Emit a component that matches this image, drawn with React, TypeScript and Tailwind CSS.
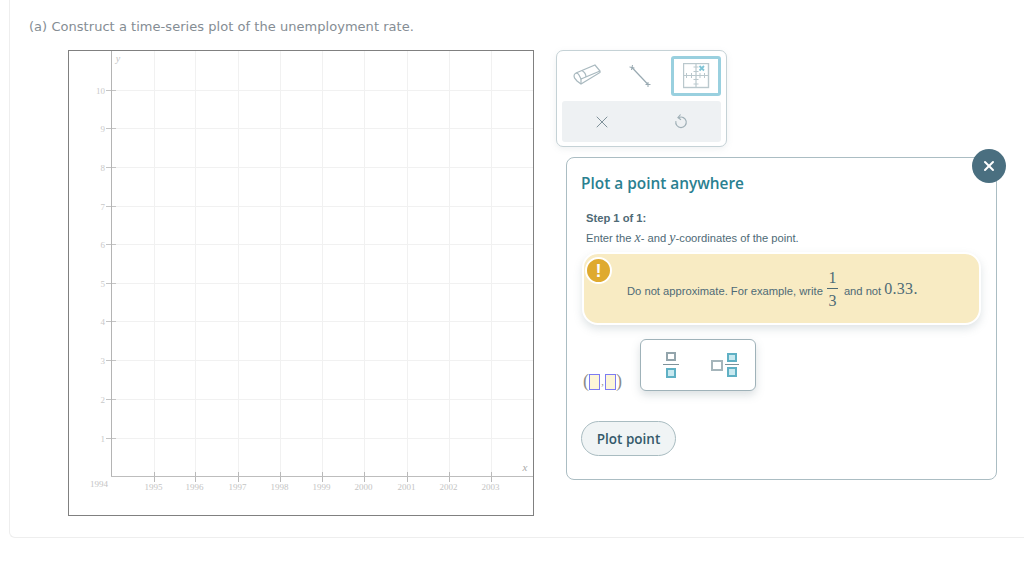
import { X } from "lucide-react";

const yTicks = [
  { label: "10", y: 90.5 },
  { label: "9", y: 128.5 },
  { label: "8", y: 167.5 },
  { label: "7", y: 206.5 },
  { label: "6", y: 244.5 },
  { label: "5", y: 283.5 },
  { label: "4", y: 321.5 },
  { label: "3", y: 360.5 },
  { label: "2", y: 399.5 },
  { label: "1", y: 438.5 },
];

const xTicks = [
  { label: "1995", x: 154.5 },
  { label: "1996", x: 195.5 },
  { label: "1997", x: 238.5 },
  { label: "1998", x: 280.5 },
  { label: "1999", x: 322.5 },
  { label: "2000", x: 364.5 },
  { label: "2001", x: 407.5 },
  { label: "2002", x: 449.5 },
  { label: "2003", x: 491.5 },
];

function Chart() {
  return (
    <div className="h-[466px] w-[466px] shrink-0 border border-[#808080]">
      {/* viewBox is in page coordinates, inside the 1px border */}
      <svg viewBox="69 51 464 464" className="block h-[464px] w-[464px]" style={{ fontFamily: "'Liberation Serif', serif" }}>
        {yTicks.map((t) => (
          <g key={t.label}>
            <line x1={111} x2={533} y1={t.y} y2={t.y} stroke="#f1f1f1" />
            <line x1={106} x2={116} y1={t.y} y2={t.y} stroke="#c4c4c4" />
            <text x={105} y={t.y + 3} textAnchor="end" fontSize={9} fill="#c9c9c9">
              {t.label}
            </text>
          </g>
        ))}
        {xTicks.map((t) => (
          <g key={t.label}>
            <line x1={t.x} x2={t.x} y1={51} y2={477} stroke="#f1f1f1" />
            <line x1={t.x} x2={t.x} y1={472} y2={482} stroke="#b9b9b9" />
            <text x={t.x - 1} y={490} textAnchor="middle" fontSize={9} fill="#c4c4c4">
              {t.label}
            </text>
          </g>
        ))}
        <line x1={111.5} x2={111.5} y1={51} y2={477} stroke="#b4b4b4" />
        <line x1={111} x2={533} y1={476.5} y2={476.5} stroke="#bdbdbd" />
        <text x={99} y={487} textAnchor="middle" fontSize={9} fill="#c4c4c4">
          1994
        </text>
        <text x={118} y={62} textAnchor="middle" fontSize={10} fontStyle="italic" fill="#c4c4c4">
          y
        </text>
        <text x={525} y={471} textAnchor="middle" fontSize={11} fontStyle="italic" fill="#a9a9a9">
          x
        </text>
      </svg>
    </div>
  );
}

function EraserIcon() {
  return (
    <svg width="30" height="23" viewBox="0 0 30 23" fill="none" stroke="#a9b9bf" strokeWidth="1.2">
      <path d="M1 13 Q1 11 3 10 L22 2 L27 8 L27 9.5 L8 21 L4 18 L1.5 15 Z" />
      <path d="M3 10 Q5 10 6 12 L8 16 L27 8" />
      <path d="M8 16 L8 21" />
      <path d="M9 7.5 Q13 10 13 14" />
    </svg>
  );
}

function LineIcon() {
  return (
    <svg width="24" height="24" viewBox="0 0 24 24" fill="none" stroke="#98a9b1" strokeWidth="1">
      <path d="M4 3.5 L20 20.5" strokeWidth="1.2" />
      <path d="M1.5 3 L6.5 4 M4.5 1 L3.5 6 M17.5 20.5 L22.5 20.5 M20 18 L20 23" />
    </svg>
  );
}

function GridIcon() {
  return (
    <svg width="27" height="26" viewBox="0 0 27 26" fill="none" stroke="#bac8cd" strokeWidth="1">
      <rect x="0.5" y="0.5" width="25" height="24" strokeWidth="1.4" />
      <path d="M13 0 V25 M0 12.5 H26" strokeWidth="1.2" />
      <path d="M3.5 10 V15 M8.5 10 V15 M17 10 V15 M21.5 10 V15" />
      <path d="M10.5 4 H15.5 M10.5 8.5 H15.5 M10.5 16.5 H15.5 M10.5 21 H15.5" />
      <path d="M16.5 3 L21 7.5 M21 3 L16.5 7.5" stroke="#7fc4d6" strokeWidth="1.8" />
    </svg>
  );
}

function UndoIcon() {
  return (
    <svg width="14" height="17" viewBox="0 0 16 18" fill="none" stroke="#9fafb6" strokeWidth="1.3">
      <path d="M5.5 4.5 A6 6 0 1 1 2.2 8.5" />
      <path d="M7.5 1 L4.5 4.5 L8 7" />
    </svg>
  );
}

function Toolbox() {
  return (
    <div className="flex h-[97px] w-[171px] flex-col rounded-[7px] border border-[#c5d2d6] bg-white px-[5px] pt-[5px] shadow-[0_2px_6px_rgba(120,140,150,0.12)]">
      <div className="flex h-[40px] items-center">
        <div className="flex w-[50px] justify-center pb-[3px] pl-[3px]">
          <EraserIcon />
        </div>
        <div className="ml-[17px] flex w-[24px] justify-center">
          <LineIcon />
        </div>
        <div className="ml-[19px] flex h-[40px] w-[50px] items-center justify-center rounded-[3px] border-[3px] border-[#99d0df]">
          <GridIcon />
        </div>
      </div>
      <div className="mt-[5px] flex h-[41px] w-[159px] items-center rounded-[3px] bg-[#eef1f3]">
        <div className="flex w-[80px] justify-center">
          <X size={20} strokeWidth={1.2} color="#7f9199" />
        </div>
        <div className="flex w-[80px] justify-center">
          <UndoIcon />
        </div>
      </div>
    </div>
  );
}

function Fraction() {
  return (
    <span className="ml-[4px] mr-[6px] mt-[2px] inline-flex w-[11px] flex-col items-center align-middle text-[16px] leading-[18px]" style={{ fontFamily: "'Liberation Serif', serif" }}>
      <span className="w-full border-b border-[#4e6a76] text-center leading-[20px]">1</span>
      <span className="text-center leading-[23px]">3</span>
    </span>
  );
}

function PaletteIcons() {
  return (
    <div className="ml-[18px] flex h-[52px] w-[116px] items-center rounded-[6px] border border-[#9fb2b9] bg-white shadow-[0_4px_8px_rgba(110,130,140,0.25)]">
      <div className="ml-[22px] flex w-[16px] flex-col items-center">
        <div className="h-[9px] w-[10px] border-2 border-[#93a5ac]" />
        <div className="mt-[3px] h-px w-[16px] bg-[#7e929a]" />
        <div className="mt-[3px] h-[10px] w-[10px] border-2 border-[#5fb0c4] bg-[#c8e9f0]" />
      </div>
      <div className="ml-[32px] flex items-center">
        <div className="h-[11px] w-[12px] border-2 border-[#a5b5bb]" />
        <div className="ml-[2px] flex w-[14px] flex-col items-center">
          <div className="h-[9px] w-[10px] border-2 border-[#5fb0c4] bg-[#c8e9f0]" />
          <div className="mt-[2px] h-px w-[14px] bg-[#7e929a]" />
          <div className="mt-[2px] h-[10px] w-[10px] border-2 border-[#5fb0c4] bg-[#c8e9f0]" />
        </div>
      </div>
    </div>
  );
}

function Panel() {
  return (
    <div className="relative ml-[10px] mt-[10px] h-[323px] w-[431px] rounded-[8px] border border-[#abbdc3] bg-white pl-[14px]" style={{ fontFamily: "'Liberation Sans', sans-serif" }}>
      <button className="absolute -right-[10px] -top-[9px] flex h-[34px] w-[34px] items-center justify-center rounded-full bg-[#4a6f80]">
        <X size={16} strokeWidth={3} color="#ffffff" />
      </button>

      <div className="pt-[16px] text-[15.4px] font-semibold leading-[20px] text-[#2a8090]" style={{ fontFamily: "'Open Sans', sans-serif" }}>
        Plot a point anywhere
      </div>
      <div className="ml-[5px] mt-[18px] text-[11.2px] font-bold leading-[12px] text-[#4e6a76]">Step 1 of 1:</div>
      <div className="ml-[5px] mt-[8px] text-[11.2px] leading-[12px] text-[#4e6a76]">
        Enter the{" "}
        <span className="text-[14px] italic" style={{ fontFamily: "'Liberation Serif', serif" }}>
          x
        </span>
        - and{" "}
        <span className="text-[14px] italic" style={{ fontFamily: "'Liberation Serif', serif" }}>
          y
        </span>
        -coordinates of the point.
      </div>

      <div className="relative ml-px mt-[8px] flex h-[73px] w-[399px] items-center rounded-[16px] border-2 border-white bg-[#f8ebc3] pl-[43px] text-[11.2px] text-[#4e6a76] shadow-[0_4px_8px_rgba(110,130,140,0.22)]">
        <div className="absolute left-px top-[3px] flex h-[27px] w-[27px] items-center justify-center rounded-full border-2 border-white bg-[#dfaa2f] text-[18px] font-bold leading-none text-white">
          !
        </div>
        <span className="mt-[5px]">Do not approximate. For example, write</span>
        <Fraction />
        <span className="mt-[5px]">and not</span>
        <span className="ml-[3px] mt-[1px] text-[16px] tracking-[0.3px]" style={{ fontFamily: "'Liberation Serif', serif" }}>
          0.33.
        </span>
      </div>

      <div className="mt-[14px] flex h-[52px] items-start">
        <div className="mt-[35px] flex h-[15px] w-[41px] items-center pl-[2px] text-[#8b8b8b]" style={{ fontFamily: "'Liberation Serif', serif" }}>
          <span className="text-[18px] leading-[15px]">(</span>
          <div className="h-[16px] w-[11px] border-[1.5px] border-[#7c7cf2] bg-[#fdf6d8]" />
          <span className="w-[6px] text-center text-[10px] leading-[15px]">,</span>
          <div className="h-[16px] w-[11px] border-[1.5px] border-[#7c7cf2] bg-[#fdf6d8]" />
          <span className="text-[18px] leading-[15px]">)</span>
        </div>
        <PaletteIcons />
      </div>

      <button className="mt-[30px] block h-[35px] w-[95px] rounded-full border border-[#a9bcc1] bg-[#f0f4f5] pt-[2px] text-[13.5px] font-semibold text-[#34596a]" style={{ fontFamily: "'Open Sans', sans-serif" }}>
        Plot point
      </button>
    </div>
  );
}

export default function App() {
  return (
    <div className="h-[561px] overflow-hidden bg-white">
      <div className="ml-[9px] h-[538px] w-[1100px] rounded-bl-[6px] border-b border-l border-[#eeeeee]">
        <div className="pl-[19px] pt-[18px] text-[13px] leading-[17px] tracking-[0.04px] text-[#858d94]" style={{ fontFamily: "'DejaVu Sans', sans-serif" }}>
          (a) Construct a time-series plot of the unemployment rate.
        </div>
        <div className="ml-[58px] mt-[15px] flex">
          <Chart />
          <div className="ml-[22px] flex flex-col">
            <Toolbox />
            <Panel />
          </div>
        </div>
      </div>
    </div>
  );
}
